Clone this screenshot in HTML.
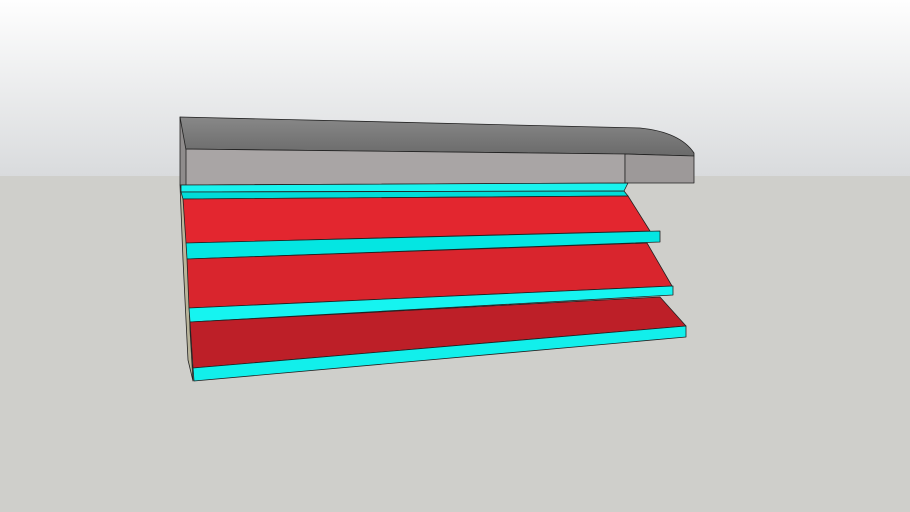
<!DOCTYPE html>
<html><head><style>
html,body{margin:0;padding:0;width:910px;height:512px;overflow:hidden}
</style></head><body>
<svg width="910" height="512" viewBox="0 0 910 512" xmlns="http://www.w3.org/2000/svg">
<defs>
<linearGradient id="sky" x1="0" y1="0" x2="0" y2="1">
<stop offset="0" stop-color="#fefefe"/><stop offset="1" stop-color="#d9dbdd"/>
</linearGradient>
<linearGradient id="top" x1="0" y1="0" x2="0" y2="1">
<stop offset="0" stop-color="#888"/><stop offset="1" stop-color="#6a6a6a"/>
</linearGradient>
</defs>
<rect x="0" y="0" width="910" height="176" fill="url(#sky)"/>
<rect x="0" y="176" width="910" height="336" fill="#cfcfcb"/>
<g stroke="#222" stroke-width="0.8" stroke-linejoin="round">
<polygon points="180,185 186,200 190,330 193,381 188,360 183,260" fill="#b9b49a"/>
<path d="M180,117 L640,128 Q680,132 694,153 L694,156 L625,154 L183,149 Z" fill="url(#top)"/>
<polygon points="183,149 625,154 625,183 183,185" fill="#a9a5a5"/>
<polygon points="625,154 694,156 694,183 625,183" fill="#9d9999"/>
<polygon points="180,117 186,150 186,185 180,185" fill="#8f8c8c"/>
<polygon points="181,185 628,183 624,191 181,192" fill="#19f3ee"/>
<polygon points="181,192 624,191 628,196 183,199" fill="#00dcd8"/>
<polygon points="183,199 628,196 650,231 186,243" fill="#e3262f"/>
<polygon points="186,243 660,231 660,242 187,259" fill="#04e6e2"/>
<polygon points="187,259 647,243 672,286 189,308" fill="#d9252d"/>
<polygon points="189,308 673,286 673,295 190,322" fill="#16f4f0"/>
<polygon points="190,322 660,297 686,326 193,368" fill="#bd1f28"/>
<polygon points="193,368 686,326 686,337 194,381" fill="#12efeb"/>
</g>
</svg>
</body></html>
